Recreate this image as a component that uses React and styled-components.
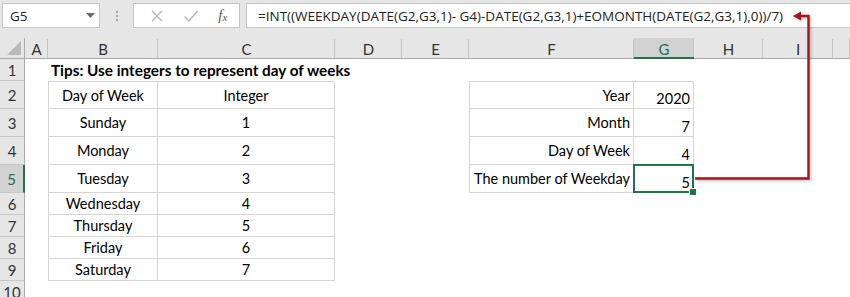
import React from 'react';
import styled, { createGlobalStyle } from 'styled-components';

const GlobalStyle = createGlobalStyle`
  html, body {
    margin: 0;
    padding: 0;
    background: #ffffff;
  }
  body {
    font-family: Lato, "Liberation Sans", sans-serif;
  }
`;

const COLS = ['A', 'B', 'C', 'D', 'E', 'F', 'G', 'H', 'I', 'J'];
const ROW_HEIGHTS = [22, 28, 28, 28, 28, 22, 22, 22, 22, 22];
const COL_WIDTHS = [23, 110, 177, 67, 67, 165, 60, 69, 70];

const days = ['Sunday', 'Monday', 'Tuesday', 'Wednesday', 'Thursday', 'Friday', 'Saturday'];

// cell contents, keyed by address
const cells = {
  B1: { text: 'Tips: Use integers to represent day of weeks', bold: true, align: 'left' },
  B2: { text: 'Day of Week' },
  C2: { text: 'Integer' },
  F2: { text: 'Year', align: 'right' },
  G2: { text: '2020', align: 'right', valign: 'bottom' },
  F3: { text: 'Month', align: 'right' },
  G3: { text: '7', align: 'right', valign: 'bottom' },
  F4: { text: 'Day of Week', align: 'right' },
  G4: { text: '4', align: 'right', valign: 'bottom' },
  F5: { text: 'The number of Weekday', align: 'right' },
  G5: { text: '5', align: 'right', valign: 'bottom', selected: true },
};
days.forEach((d, i) => {
  cells[`B${i + 3}`] = { text: d };
  cells[`C${i + 3}`] = { text: String(i + 1) };
});

const tables = [
  { c0: 1, c1: 2, r0: 2, r1: 9 },
  { c0: 5, c1: 6, r0: 2, r1: 5 },
];

function tableEdges(ci, r) {
  const t = tables.find(t => ci >= t.c0 && ci <= t.c1 && r >= t.r0 && r <= t.r1);
  if (!t) return null;
  return { top: r === t.r0, left: ci === t.c0 };
}

function App() {
  return (
    <Page>
      <GlobalStyle />
      <FormulaBar>
        <NameBox>
          <span>G5</span>
          <svg width="9" height="5" viewBox="0 0 9 5">
            <path d="M0 0 H9 L4.5 5 Z" fill="#6a6a6a" />
          </svg>
        </NameBox>
        <Grip>
          <i /><i /><i />
        </Grip>
        <EditBox>
          <svg width="14" height="14" viewBox="0 0 14 14">
            <path d="M2 2 L12 12 M12 2 L2 12" stroke="#b4b4b4" strokeWidth="1.3" fill="none" />
          </svg>
          <svg width="16" height="14" viewBox="0 0 16 14">
            <path d="M1.5 7.5 L6 12 L14.5 2" stroke="#b4b4b4" strokeWidth="1.3" fill="none" />
          </svg>
          <Fx>f<sub>x</sub></Fx>
        </EditBox>
        <FormulaBox>=INT((WEEKDAY(DATE(G2,G3,1)- G4)-DATE(G2,G3,1)+EOMONTH(DATE(G2,G3,1),0))/7)</FormulaBox>
      </FormulaBar>

      <Sheet>
        <Corner>
          <svg width="14" height="14" viewBox="0 0 14 14">
            <path d="M14 0 V14 H0 Z" fill="#b9b9b9" />
          </svg>
        </Corner>
        {COLS.map(c => (
          <ColHead key={c} $active={c === 'G'}>{c === 'J' ? '' : c}</ColHead>
        ))}
        {ROW_HEIGHTS.map((h, ri) => {
          const r = ri + 1;
          return (
            <React.Fragment key={r}>
              <RowHead $active={r === 5}>{r}</RowHead>
              {COLS.map((c, ci) => {
                const data = cells[`${c}${r}`];
                const edges = tableEdges(ci, r);
                return (
                  <Cell
                    key={c}
                    $boxed={!!edges}
                    $top={edges && edges.top}
                    $left={edges && edges.left}
                    $align={data && data.align}
                    $valign={data && data.valign}
                    $bold={data && data.bold}
                    $selected={data && data.selected}
                  >
                    {data && <span>{data.text}</span>}
                  </Cell>
                );
              })}
            </React.Fragment>
          );
        })}
      </Sheet>

      <Callout width="850" height="297" viewBox="0 0 850 297">
        <defs>
          <filter id="sh" x="-10%" y="-10%" width="130%" height="130%">
            <feDropShadow dx="1.5" dy="1.5" stdDeviation="1" floodColor="#000" floodOpacity="0.25" />
          </filter>
        </defs>
        <g filter="url(#sh)">
          <path d="M695 178.5 H808.5 V16 H800" stroke="#a3131c" strokeWidth="2.4" fill="none" />
          <path d="M793 16 L801 11.5 L801 20.5 Z" fill="#a3131c" />
        </g>
      </Callout>
    </Page>
  );
}

const Page = styled.div`
  position: relative;
  width: 850px;
  height: 297px;
  overflow: hidden;
  background: #e6e6e6;
  display: flex;
  flex-direction: column;
`;

const FormulaBar = styled.div`
  flex: none;
  display: flex;
  align-items: center;
  height: 31px;
  padding-left: 2px;
  margin-bottom: 7px;
  font-family: "Open Sans", "Noto Sans", sans-serif;
  color: #222;
`;

const NameBox = styled.div`
  box-sizing: border-box;
  width: 98px;
  height: 25px;
  background: #fff;
  border: 1px solid #c6c6c6;
  display: flex;
  align-items: center;
  justify-content: space-between;
  padding: 0 4px 0 7px;
  font-size: 13.5px;
`;

const Grip = styled.div`
  width: 33px;
  display: flex;
  flex-direction: column;
  align-items: center;
  gap: 2px;
  i {
    width: 2px;
    height: 2px;
    background: #a6a6a6;
  }
`;

const EditBox = styled.div`
  box-sizing: border-box;
  width: 107px;
  height: 25px;
  background: #fff;
  border: 1px solid #c6c6c6;
  display: flex;
  align-items: center;
  justify-content: space-around;
  padding: 0 2px 0 6px;
`;

const Fx = styled.span`
  font-family: "Liberation Serif", serif;
  font-style: italic;
  font-size: 15px;
  color: #555;
  sub {
    font-size: 11px;
    vertical-align: 0;
    position: relative;
    top: 1px;
  }
`;

const FormulaBox = styled.div`
  box-sizing: border-box;
  flex: 1;
  height: 25px;
  margin-left: 6px;
  background: #fff;
  border: 1px solid #c6c6c6;
  border-right: none;
  display: flex;
  align-items: center;
  padding-left: 11px;
  font-size: 13.5px;
  white-space: nowrap;
`;

const Sheet = styled.div`
  flex: none;
  display: grid;
  grid-template-columns: 25px ${COL_WIDTHS.map(w => `${w}px`).join(' ')} 1fr;
  grid-template-rows: 21px ${ROW_HEIGHTS.map(h => `${h}px`).join(' ')};
  background: #fff;
  font-family: Lato, "Liberation Sans", sans-serif;
  font-size: 14.5px;
  color: #000;
`;

const Corner = styled.div`
  background: #e6e6e6;
  border-right: 1px solid #ababab;
  border-bottom: 1px solid #ababab;
  display: flex;
  align-items: flex-end;
  justify-content: flex-end;
  padding: 0 3px 3px 0;
`;

const ColHead = styled.div`
  box-sizing: border-box;
  background: ${p => (p.$active ? '#d2d2d2' : '#e6e6e6')};
  color: ${p => (p.$active ? '#217346' : '#333')};
  border-bottom: ${p => (p.$active ? '2px solid #217346' : '1px solid #ababab')};
  display: flex;
  align-items: center;
  justify-content: center;
  padding-top: 2px;
  font-size: 15px;
  position: relative;
  &::after {
    content: '';
    position: absolute;
    right: 0;
    top: 1px;
    bottom: 0;
    width: 1px;
    background: #c6c6c6;
  }
`;

const RowHead = styled.div`
  box-sizing: border-box;
  background: ${p => (p.$active ? '#d2d2d2' : '#e6e6e6')};
  color: ${p => (p.$active ? '#217346' : '#333')};
  border-right: ${p => (p.$active ? '2px solid #217346' : '1px solid #ababab')};
  border-bottom: 1px solid #c6c6c6;
  display: flex;
  align-items: center;
  justify-content: center;
  font-size: 15px;
`;

const Cell = styled.div`
  box-sizing: border-box;
  position: relative;
  display: flex;
  align-items: ${p => (p.$valign === 'bottom' ? 'flex-end' : 'center')};
  justify-content: ${p =>
    p.$align === 'left' ? 'flex-start' : p.$align === 'right' ? 'flex-end' : 'center'};
  padding: 0 3px ${p => (p.$valign === 'bottom' ? '1px' : '0')} 3px;
  white-space: nowrap;
  font-weight: ${p => (p.$bold ? 700 : 400)};
  font-size: ${p => (p.$bold ? '15.3px' : 'inherit')};
  border-right: ${p => (p.$boxed ? '1px solid #d4d4d4' : 'none')};
  border-bottom: ${p => (p.$boxed ? '1px solid #d4d4d4' : 'none')};
  border-top: ${p => (p.$top ? '1px solid #d4d4d4' : 'none')};
  border-left: ${p => (p.$left ? '1px solid #d4d4d4' : 'none')};
  span {
    position: relative;
    z-index: 1;
  }
  ${p =>
    p.$selected &&
    `
    &::after {
      content: '';
      position: absolute;
      left: -1px;
      top: -1px;
      right: -1px;
      bottom: -1px;
      border: 2px solid #217346;
      z-index: 2;
    }
    &::before {
      content: '';
      position: absolute;
      right: -4px;
      bottom: -4px;
      width: 6px;
      height: 6px;
      background: #217346;
      border: 1px solid #fff;
      z-index: 3;
    }
  `}
`;

const Callout = styled.svg`
  position: absolute;
  left: 0;
  top: 0;
  pointer-events: none;
`;

export default App;
